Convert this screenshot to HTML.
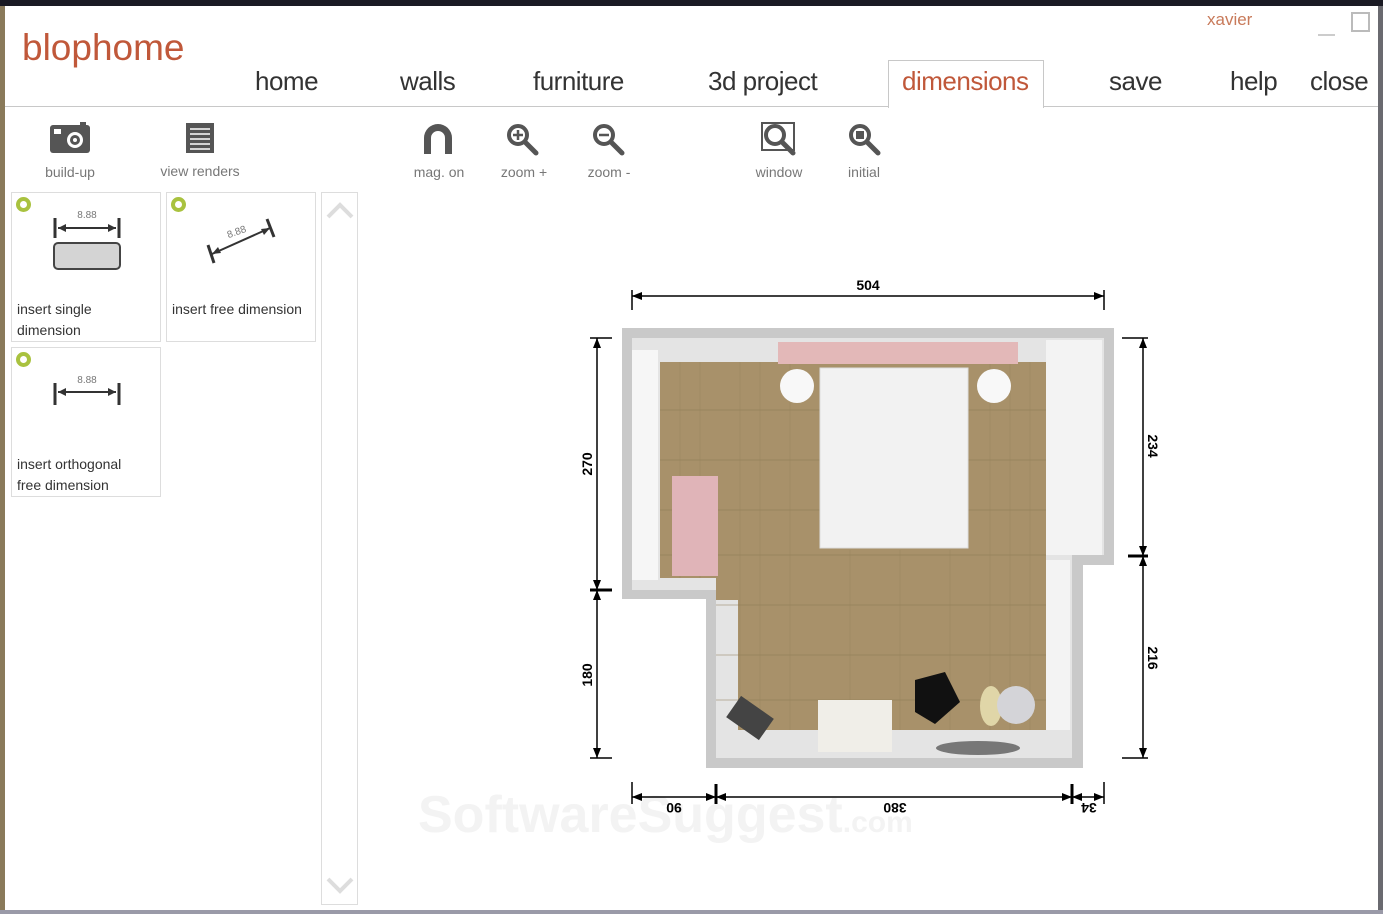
<!DOCTYPE html>
<html><head><meta charset="utf-8"><style>
*{margin:0;padding:0;box-sizing:border-box}
body{width:1383px;height:914px;overflow:hidden;background:#fff;font-family:"Liberation Sans",sans-serif;position:relative}
.a{position:absolute}
.nav{position:absolute;top:66px;font-size:26px;color:#333;font-weight:300;letter-spacing:-0.5px}
.lbl{position:absolute;font-size:14px;color:#777;text-align:center}
.card{position:absolute;border:1px solid #ddd;background:#fff}
.card .dot{position:absolute;left:4px;top:4px;width:15px;height:15px;border-radius:50%;border:4px solid #a9c23f}
.card .t{position:absolute;left:5px;font-size:14px;color:#333;line-height:21px}
</style></head><body>
<div class="a" style="left:0;top:0;width:1383px;height:6px;background:#1a1a24"></div>
<div class="a" style="left:0;top:6px;width:5px;height:908px;background:#8a7a5a"></div>
<div class="a" style="left:1378px;top:6px;width:5px;height:908px;background:#6a6a70"></div>
<div class="a" style="left:0;top:910px;width:1383px;height:4px;background:#9a9aa8"></div>

<div class="a" style="left:22px;top:27px;font-size:37px;color:#c0583a;font-weight:300">blophome</div>
<div class="a" style="left:1207px;top:10px;font-size:17px;color:#c87a5a">xavier</div>
<div class="a" style="left:1318px;top:34px;width:17px;height:2px;background:#ccc"></div>
<div class="a" style="left:1351px;top:12px;width:19px;height:20px;border:2px solid #bbb"></div>

<div class="nav" style="left:255px">home</div>
<div class="nav" style="left:400px">walls</div>
<div class="nav" style="left:533px">furniture</div>
<div class="nav" style="left:708px">3d project</div>
<div class="a" style="left:888px;top:60px;width:156px;height:48px;border:1px solid #c8c8c8;border-bottom:none;background:#fff;z-index:2"></div>
<div class="nav" style="left:902px;color:#c0583a;z-index:3">dimensions</div>
<div class="nav" style="left:1109px">save</div>
<div class="nav" style="left:1230px">help</div>
<div class="nav" style="left:1310px">close</div>
<div class="a" style="left:5px;top:106px;width:1373px;height:1px;background:#c8c8c8"></div>

<svg class="a" style="left:0;top:110px" width="900" height="50">
<g fill="#555">
<rect x="50" y="15" width="40" height="28" rx="3"/><rect x="80" y="12" width="6" height="4"/>
<circle cx="75" cy="30" r="8" fill="#fff"/><circle cx="75" cy="30" r="5" fill="#555"/><circle cx="75" cy="30" r="2" fill="#fff"/>
<rect x="54" y="19" width="7" height="5" fill="#fff"/>
<rect x="186" y="13" width="28" height="30"/>
</g>
<g stroke="#fff" stroke-width="1.5"><line x1="190" y1="19" x2="210" y2="19"/><line x1="190" y1="24" x2="210" y2="24"/><line x1="190" y1="29" x2="210" y2="29"/><line x1="190" y1="34" x2="210" y2="34"/><line x1="190" y1="39" x2="210" y2="39"/></g>
<path d="M424 44V28a14 14 0 0 1 28 0v16h-7V28a7 7 0 0 0-14 0v16z" fill="#555"/>
<g fill="none" stroke="#555" stroke-width="4">
<circle cx="518" cy="25" r="9"/><circle cx="604" cy="25" r="9"/><circle cx="775" cy="25" r="9"/><circle cx="860" cy="25" r="9"/></g>
<g stroke="#555" stroke-width="5" stroke-linecap="round">
<line x1="526" y1="33" x2="536" y2="43"/><line x1="612" y1="33" x2="622" y2="43"/><line x1="783" y1="33" x2="793" y2="43"/><line x1="868" y1="33" x2="878" y2="43"/></g>
<g stroke="#555" stroke-width="2.5"><line x1="513" y1="25" x2="523" y2="25"/><line x1="518" y1="20" x2="518" y2="30"/><line x1="599" y1="25" x2="609" y2="25"/></g>
<rect x="762" y="13" width="32" height="27" fill="none" stroke="#555" stroke-width="2"/>
<rect x="856" y="21" width="8" height="8" fill="#555"/>
</svg>
<div class="lbl" style="left:30px;top:164px;width:80px">build-up</div>
<div class="lbl" style="left:150px;top:163px;width:100px">view renders</div>
<div class="lbl" style="left:399px;top:164px;width:80px">mag. on</div>
<div class="lbl" style="left:484px;top:164px;width:80px">zoom +</div>
<div class="lbl" style="left:569px;top:164px;width:80px">zoom -</div>
<div class="lbl" style="left:739px;top:164px;width:80px">window</div>
<div class="lbl" style="left:824px;top:164px;width:80px">initial</div>

<div class="card" style="left:11px;top:192px;width:150px;height:150px"><div class="dot"></div>
<svg class="a" style="left:0;top:0" width="150" height="100"><text x="75" y="25" font-size="10" fill="#777" text-anchor="middle" font-family="Liberation Sans">8.88</text>
<g stroke="#333" stroke-width="3"><line x1="43" y1="25" x2="43" y2="45"/><line x1="107" y1="25" x2="107" y2="45"/></g><line x1="46" y1="35" x2="104" y2="35" stroke="#333" stroke-width="2"/><path d="M46 35l8-4v8zM104 35l-8-4v8z" fill="#333"/>
<rect x="42" y="50" width="66" height="26" rx="4" fill="#d4d4d4" stroke="#444" stroke-width="2"/></svg>
<div class="t" style="top:106px">insert single<br>dimension</div></div>
<div class="card" style="left:166px;top:192px;width:150px;height:150px"><div class="dot"></div>
<svg class="a" style="left:0;top:0" width="150" height="100"><text x="70" y="42" font-size="10" fill="#777" text-anchor="middle" transform="rotate(-20 70 40)" font-family="Liberation Sans">8.88</text>
<g stroke="#333" stroke-width="3"><line x1="41" y1="52" x2="47" y2="70"/><line x1="100" y1="26" x2="107" y2="44"/></g><line x1="45" y1="61" x2="103" y2="35" stroke="#333" stroke-width="2"/><path d="M45 61l9-1-3-6zM103 35l-9 1 3 6z" fill="#333"/></svg>
<div class="t" style="top:106px">insert free dimension</div></div>
<div class="card" style="left:11px;top:347px;width:150px;height:150px"><div class="dot"></div>
<svg class="a" style="left:0;top:0" width="150" height="100"><text x="75" y="35" font-size="10" fill="#777" text-anchor="middle" font-family="Liberation Sans">8.88</text>
<g stroke="#333" stroke-width="3"><line x1="43" y1="35" x2="43" y2="57"/><line x1="107" y1="35" x2="107" y2="57"/></g><line x1="46" y1="44" x2="104" y2="44" stroke="#333" stroke-width="2"/><path d="M46 44l8-4v8zM104 44l-8-4v8z" fill="#333"/></svg>
<div class="t" style="top:106px">insert orthogonal<br>free dimension</div></div>
<div class="card" style="left:321px;top:192px;width:37px;height:713px">
<svg class="a" style="left:4px;top:8px" width="28" height="20"><path d="M2 16L14 4l12 12" fill="none" stroke="#ddd" stroke-width="4"/></svg>
<svg class="a" style="left:4px;top:682px" width="28" height="20"><path d="M2 4l12 12L26 4" fill="none" stroke="#ddd" stroke-width="4"/></svg></div>

<div class="a" style="left:418px;top:785px;font-size:52px;font-weight:bold;color:#f3f3f3">SoftwareSuggest<span style="font-size:30px">.com</span></div>

<svg class="a" style="left:0;top:0" width="1383" height="914">
<path d="M622 328H1114V565H1083V768H706V599H622Z" fill="#c9c9c9"/>
<path d="M632 338H1104V555H1072V758H716V590H632Z" fill="#e4e4e4"/>
<path d="M660 362H1046V730H738V600H716V578H660Z" fill="#a8916a"/>
<g stroke="#8c7a56" stroke-width="1" opacity=".5">
<line x1="660" y1="410" x2="1046" y2="410"/><line x1="660" y1="460" x2="1046" y2="460"/><line x1="660" y1="510" x2="1046" y2="510"/><line x1="660" y1="555" x2="1046" y2="555"/><line x1="716" y1="605" x2="1046" y2="605"/><line x1="716" y1="655" x2="1046" y2="655"/><line x1="716" y1="700" x2="1046" y2="700"/>
</g>
<g stroke="#8c7a56" stroke-width="1" opacity=".25">
<line x1="680" y1="362" x2="680" y2="578"/><line x1="700" y1="362" x2="700" y2="578"/><line x1="740" y1="362" x2="740" y2="730"/><line x1="760" y1="362" x2="760" y2="730"/><line x1="790" y1="362" x2="790" y2="730"/><line x1="990" y1="362" x2="990" y2="730"/><line x1="1010" y1="362" x2="1010" y2="730"/><line x1="1030" y1="362" x2="1030" y2="730"/><line x1="850" y1="550" x2="850" y2="730"/><line x1="900" y1="550" x2="900" y2="730"/><line x1="950" y1="550" x2="950" y2="730"/>
</g>
<rect x="632" y="350" width="26" height="230" fill="#f6f6f6"/>
<rect x="1046" y="340" width="56" height="215" fill="#f3f3f3"/>
<rect x="1046" y="560" width="24" height="170" fill="#f3f3f3"/>
<rect x="778" y="342" width="240" height="22" fill="#e3b8b8"/>
<rect x="672" y="476" width="46" height="100" fill="#e0b4b8"/>
<rect x="820" y="368" width="148" height="180" fill="#f2f2f2" stroke="#ddd"/>
<circle cx="797" cy="386" r="17" fill="#f8f8f8"/><circle cx="994" cy="386" r="17" fill="#f8f8f8"/>
<rect x="818" y="700" width="74" height="52" fill="#f0eee8"/>
<path d="M915 680l30-8 15 30-25 22-20-12z" fill="#111"/>
<ellipse cx="991" cy="706" rx="11" ry="20" fill="#e0d6a8"/><circle cx="1016" cy="705" r="19" fill="#d4d4d8"/>
<ellipse cx="978" cy="748" rx="42" ry="7" fill="#777"/>
<rect x="730" y="705" width="40" height="26" fill="#444" transform="rotate(35 750 718)"/>
<g stroke="#000" stroke-width="1.5" fill="none">
<line x1="632" y1="296" x2="1104" y2="296"/><line x1="632" y1="290" x2="632" y2="310"/><line x1="1104" y1="290" x2="1104" y2="310"/>
<line x1="597" y1="338" x2="597" y2="758"/><line x1="590" y1="338" x2="612" y2="338"/><line x1="590" y1="758" x2="612" y2="758"/>
<line x1="1143" y1="338" x2="1143" y2="758"/><line x1="1122" y1="338" x2="1148" y2="338"/><line x1="1122" y1="758" x2="1148" y2="758"/>
<line x1="632" y1="797" x2="1104" y2="797"/><line x1="632" y1="782" x2="632" y2="804"/><line x1="1104" y1="782" x2="1104" y2="804"/>
</g>
<g stroke="#000" stroke-width="3"><line x1="590" y1="590" x2="612" y2="590"/><line x1="1128" y1="556" x2="1148" y2="556"/><line x1="716" y1="784" x2="716" y2="804"/><line x1="1072" y1="784" x2="1072" y2="804"/></g>
<g fill="#000">
<path d="M632 296l10-4v8zM1104 296l-10-4v8z"/>
<path d="M597 338l-4 10h8zM597 590l-4-10h8zM597 590l-4 10h8zM597 758l-4-10h8z"/>
<path d="M1143 338l-4 10h8zM1143 556l-4-10h8zM1143 556l-4 10h8zM1143 758l-4-10h8z"/>
<path d="M632 797l10-4v8zM716 797l-10-4v8zM716 797l10-4v8zM1072 797l-10-4v8zM1072 797l10-4v8zM1104 797l-10-4v8z"/>
</g>
<g font-size="14" font-weight="bold" font-family="Liberation Sans" text-anchor="middle">
<text x="868" y="290">504</text>
<text transform="translate(592 464) rotate(-90)">270</text>
<text transform="translate(592 675) rotate(-90)">180</text>
<text transform="translate(1148 446) rotate(90)">234</text>
<text transform="translate(1148 658) rotate(90)">216</text>
<text transform="translate(674 803) rotate(180)">90</text>
<text transform="translate(895 803) rotate(180)">380</text>
<text transform="translate(1089 803) rotate(180)">34</text>
</g>
</svg>
</body></html>
